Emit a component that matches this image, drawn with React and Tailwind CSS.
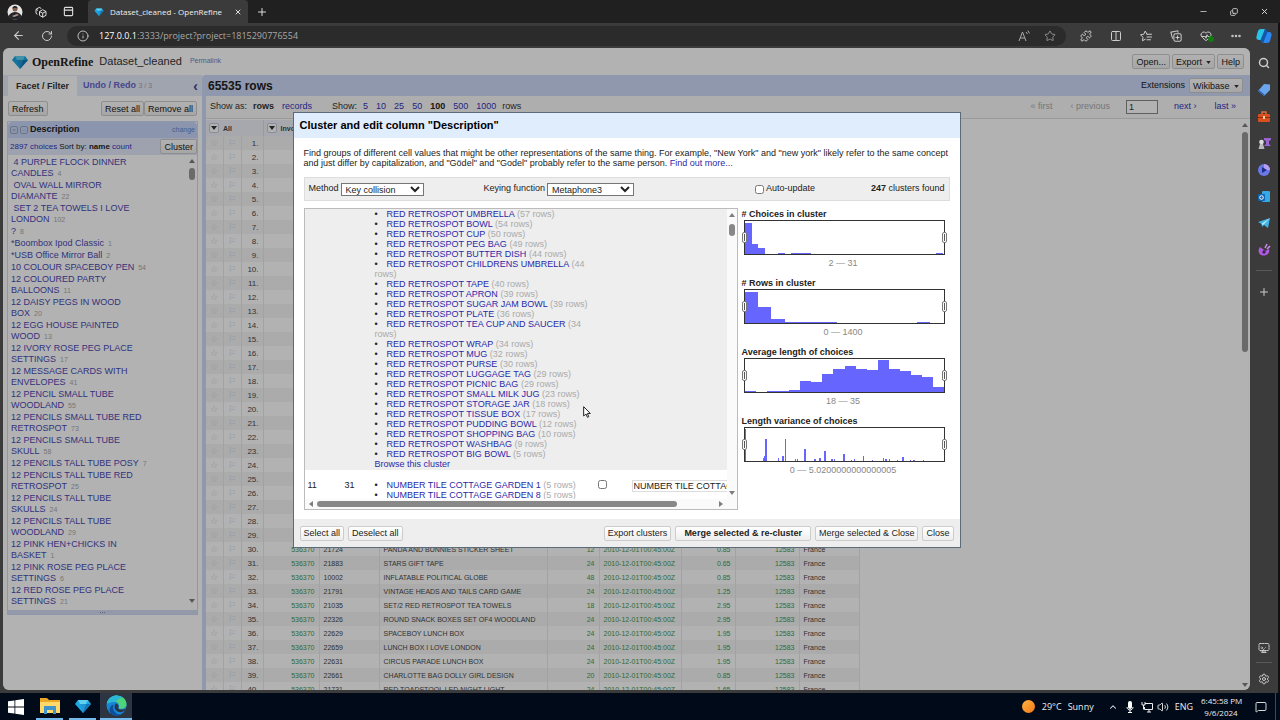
import {
    ArrowLeft, RotateCw, Info, Plus, X, Minus, Copy, Star, Puzzle, Columns2, HeartPulse,
    Ellipsis, Search, Settings, ChevronUp, Volume2, MessageSquare, PanelTop, Scissors, Monitor,
} from 'lucide-react';

const choices = [
    [['\u00a04 PURPLE FLOCK DINNER', 'CANDLES'], 4],
    [['\u00a0OVAL WALL MIRROR', 'DIAMANTE'], 22],
    [['\u00a0SET 2 TEA TOWELS I LOVE', 'LONDON'], 102],
    [['?'], 8],
    [['*Boombox Ipod Classic'], 1],
    [['*USB Office Mirror Ball'], 2],
    [['10 COLOUR SPACEBOY PEN'], 54],
    [['12 COLOURED PARTY', 'BALLOONS'], 11],
    [['12 DAISY PEGS IN WOOD', 'BOX'], 20],
    [['12 EGG HOUSE PAINTED', 'WOOD'], 13],
    [['12 IVORY ROSE PEG PLACE', 'SETTINGS'], 17],
    [['12 MESSAGE CARDS WITH', 'ENVELOPES'], 41],
    [['12 PENCIL SMALL TUBE', 'WOODLAND'], 55],
    [['12 PENCILS SMALL TUBE RED', 'RETROSPOT'], 73],
    [['12 PENCILS SMALL TUBE', 'SKULL'], 58],
    [['12 PENCILS TALL TUBE POSY'], 7],
    [['12 PENCILS TALL TUBE RED', 'RETROSPOT'], 25],
    [['12 PENCILS TALL TUBE', 'SKULLS'], 24],
    [['12 PENCILS TALL TUBE', 'WOODLAND'], 29],
    [['12 PINK HEN+CHICKS IN', 'BASKET'], 1],
    [['12 PINK ROSE PEG PLACE', 'SETTINGS'], 6],
    [['12 RED ROSE PEG PLACE', 'SETTINGS'], 21],
    [['15CM CHRISTMAS GLASS BALL'], 20],
];

const records = {
    30: ['21724', 'PANDA AND BUNNIES STICKER SHEET', 12, '0.85'],
    31: ['21883', 'STARS GIFT TAPE', 24, '0.65'],
    32: ['10002', 'INFLATABLE POLITICAL GLOBE', 48, '0.85'],
    33: ['21791', 'VINTAGE HEADS AND TAILS CARD GAME', 24, '1.25'],
    34: ['21035', 'SET/2 RED RETROSPOT TEA TOWELS', 18, '2.95'],
    35: ['22326', 'ROUND SNACK BOXES SET OF4 WOODLAND', 24, '2.95'],
    36: ['22629', 'SPACEBOY LUNCH BOX', 24, '1.95'],
    37: ['22659', 'LUNCH BOX I LOVE LONDON', 24, '1.95'],
    38: ['22631', 'CIRCUS PARADE LUNCH BOX', 24, '1.95'],
    39: ['22661', 'CHARLOTTE BAG DOLLY GIRL DESIGN', 20, '0.85'],
    40: ['21731', 'RED TOADSTOOL LED NIGHT LIGHT', 24, '1.65'],
};

const clusterRows = [
    ['UMBRELLA', 57], ['BOWL', 54], ['CUP', 50], ['PEG BAG', 49], ['BUTTER DISH', 44],
    ['CHILDRENS UMBRELLA', 44], ['TAPE', 40], ['APRON', 39], ['SUGAR JAM BOWL', 39], ['PLATE', 36],
    ['TEA CUP AND SAUCER', 34], ['WRAP', 34], ['MUG', 32], ['PURSE', 30], ['LUGGAGE TAG', 29],
    ['PICNIC BAG', 29], ['SMALL MILK JUG', 23], ['STORAGE JAR', 18], ['TISSUE BOX', 17],
    ['PUDDING BOWL', 12], ['SHOPPING BAG', 10], ['WASHBAG', 9], ['BIG BOWL', 5],
];

// bars are [x, width, height] on a 603 x 103 grid
const charts = [
    {
        title: '# Choices in cluster',
        range: '2 — 31',
        bars: [[0, 20, 98], [20, 20, 31], [40, 20, 20], [100, 20, 4], [140, 60, 3], [580, 20, 3]],
    },
    {
        title: '# Rows in cluster',
        range: '0 — 1400',
        bars: [[0, 40, 98], [40, 40, 50], [80, 40, 12], [120, 160, 3], [520, 42, 3]],
    },
    {
        title: 'Average length of choices',
        range: '18 — 35',
        bars: [4, 0, 4, 4, 7, 35, 32, 57, 72, 82, 72, 68, 100, 72, 66, 52, 47, 17].map((h, i) => [i * 33.5, 33.5, h]),
    },
    {
        title: 'Length variance of choices',
        range: '0 — 5.0200000000000005',
        bars: [
            [0, 100], [55, 8], [59, 17], [62, 68], [99, 10], [113, 15], [120, 68], [150, 6], [157, 6], [180, 38],
            [210, 5], [225, 10], [240, 32], [262, 5], [270, 6], [298, 22], [320, 4], [330, 6], [358, 16], [385, 4],
            [417, 10], [425, 5], [435, 5], [460, 4], [477, 14], [500, 4], [510, 4], [538, 4],
        ].map(([x, h]) => [x, 4, h]),
    },
];

const Gem = ({ className }) => (
    <svg viewBox="0 0 16 14" className={className}>
        <path d="M3 1h10l3 4-8 9-8-9z" fill="#1ba8e0" />
        <path d="M3 1h10l-2 4H5z" fill="#5fd0f2" />
        <path d="M5 5h6l-3 9z" fill="#2196d8" />
        <path d="M11 5h5l-8 9z" fill="#1577b8" />
    </svg>
);

const Caret = () => (
    <svg viewBox="0 0 6 4" className="ml-0.5 inline-block h-[3px] w-[5px]"><path d="M0 0h6L3 4z" fill="#333" /></svg>
);

const Btn = ({ children, className = 'px-[3px]' }) => (
    <button className={`h-[15px] shrink-0 whitespace-nowrap rounded-xs border border-[#ccc] bg-linear-to-b from-white to-[#eee] text-[9px] leading-3 text-[#222] ${className}`}>
        {children}
    </button>
);

const Arrow = ({ dir, className = '' }) => {
    const paths = { up: 'M0 5h6L3 1z', down: 'M0 1h6L3 5z', left: 'M5 0v6L1 3z', right: 'M1 0v6l4-3z' };
    return <svg viewBox="0 0 6 6" className={`size-1.5 shrink-0 ${className}`}><path d={paths[dir]} fill="#7d7d7d" /></svg>;
};

const TabBar = () => (
    <div className="flex h-[23px] shrink-0 items-center bg-[#202020] text-[#ddd]">
        <svg viewBox="0 0 16 16" className="ml-[7px] size-4">
            <circle cx="8" cy="8" r="7.5" fill="#e9e4e1" />
            <circle cx="8" cy="5" r="2.5" fill="#80604f" />
            <path d="M5.400 4.500a2.600 2.600 0 0 1 5.200 0l-2.600-.8z" fill="#222" />
            <path d="M1.500 12c2-3 4-4 6.500-4s5 1 6.500 4A7.500 7.500 0 0 1 8 15.500 7.500 7.500 0 0 1 1.500 12z" fill="#23252b" />
            <path d="M5 12l5-2 2 1-5 2z" fill="#b99a8a" />
        </svg>
        <svg viewBox="0 0 12 12" className="ml-3 size-3" fill="none" stroke="#ddd">
            <path d="M4.500 5.500l3.200-1.800L11 5.500v3.800l-3.300 1.900-3.200-1.900zM4.500 5.500l3.200 1.700L11 5.500M7.700 7.200v4M2.500 8.300L1 7.400V3.300L4.300 1.400l2 1.100M1 3.300l2 1.100" />
        </svg>
        <PanelTop size={11} strokeWidth={2.4} className="ml-4" />
        <div className="ml-3.5 flex h-full w-[160px] items-center rounded-t bg-[#3b3b3b] pl-1.5">
            <Gem className="h-2 w-2.5" />
            <span className="ml-1.5 whitespace-nowrap text-[8px] text-[#eee]">Dataset_cleaned - OpenRefine</span>
            <button aria-label="Close tab" className="ml-auto mr-1.5"><X size={8} strokeWidth={3} /></button>
        </div>
        <button aria-label="New tab" className="ml-2"><Plus size={12} strokeWidth={2} /></button>
        <div className="ml-auto mr-[11px] flex items-center gap-[22px]">
            <button aria-label="Minimize"><Minus size={9} /></button>
            <button aria-label="Restore"><Copy size={8} strokeWidth={2.5} className="-scale-x-100 rotate-180" /></button>
            <button aria-label="Close"><X size={9} strokeWidth={2.5} /></button>
        </div>
    </div>
);

const Toolbar = () => (
    <div className="flex h-[25px] shrink-0 items-center text-[#ccc]">
        <button aria-label="Back" className="ml-3"><ArrowLeft size={13} strokeWidth={2} /></button>
        <button aria-label="Reload" className="ml-4"><RotateCw size={12} strokeWidth={2} /></button>
        <div className="ml-3.5 flex h-5 flex-1 items-center rounded-full bg-[#2b2b2b] px-2.5">
            <Info size={12} strokeWidth={1.8} />
            <span className="ml-2.5 text-[9px] text-[#a8a8a8]"><span className="text-white">127.0.0.1</span>:3333/project?project=1815290776554</span>
            <svg viewBox="0 0 12 12" className="ml-auto size-3" fill="none" stroke="#aaa">
                <path d="M1 11l3.500-9L8 11M2.300 8h4.500M8 2l1.500 2M9.800.6l1.700 2.800" />
            </svg>
            <Star size={12} strokeWidth={1.8} className="ml-3.5 text-[#999]" />
        </div>
        <div className="ml-3.5 mr-2 flex items-center gap-[18px]">
            <Puzzle size={12} strokeWidth={2} />
            <Columns2 size={12} strokeWidth={2} />
            <svg viewBox="0 0 24 24" className="size-3" fill="none" stroke="#ccc" strokeWidth="2" strokeLinejoin="round" strokeLinecap="round">
                <path d="M14 8.500L10.500 2 7.500 8.500 1 9.500l5 5L5 21.500l5.500-3M14 8.500h9M14 14h9M14 19.500h7" />
            </svg>
            <svg viewBox="0 0 14 14" className="size-3" fill="none" stroke="#ccc" strokeWidth="1.200">
                <rect x="4.500" y="4.500" width="8.500" height="8.500" rx="1.500" />
                <path d="M8.800 6.500v4.500M6.500 8.800H11M3 10L1 2.500 9 1l.5 2" />
            </svg>
            <span className="relative"><HeartPulse size={12} strokeWidth={2} /><i className="absolute -right-0.5 bottom-0 size-1.5 rounded-full bg-[#107c10]" /></span>
            <Ellipsis size={12} strokeWidth={3} />
        </div>
    </div>
);

const EdgeSidebar = () => (
    <aside className="flex w-[30px] shrink-0 flex-col items-center border-r-2 border-[#111] bg-[#3b3b3b] pt-[5px]">
        <svg viewBox="0 0 16 16" className="size-4">
            <path d="M5 1h4L6 12H3C1 12 0 10.500.500 8.500L2 3c.5-1.300 1.500-2 3-2z" fill="#29c5e8" />
            <path d="M11 4h2c2 0 3 1.500 2.500 3.500L14 13c-.5 1.300-1.500 2-3 2H7z" fill="#2b86f0" />
            <path d="M9 1c2 0 2 1 2.500 3L7 15c-2 0-2-1-2.500-3z" fill="#1456a8" />
        </svg>
        <Search size={12} strokeWidth={3} className="mt-[13px] text-[#ccc]" />
        <svg viewBox="0 0 14 14" className="mt-[14px] size-3.5">
            <path d="M7 1l6 .5V7l-6 6-6-5z" fill="#6ba5ee" /><path d="M1 8l6 5 1-1-6-5z" fill="#2e62b8" />
        </svg>
        <svg viewBox="0 0 14 14" className="mt-[13px] size-3.5">
            <path d="M5 4V2h4v2" fill="none" stroke="#e46a33" strokeWidth="1.500" />
            <rect x="1" y="4" width="12" height="8" rx="1" fill="#d94f1d" /><path d="M1 7h12v1H1z" fill="#8c2a0c" /><path d="M6 6h2v3H6z" fill="#ffd0a0" />
        </svg>
        <svg viewBox="0 0 14 14" className="mt-[13px] size-3.5">
            <path d="M7 1h7v2l-2 1v3l2 2H7l2-2V4L7 3z" fill="#9a63d1" />
            <circle cx="4.500" cy="5" r="2.300" fill="#ddd" /><path d="M3 7h3l1.500 5h-6z" fill="#bbb" />
        </svg>
        <svg viewBox="0 0 14 14" className="mt-[12px] size-3.5">
            <circle cx="7" cy="7" r="6" fill="#6a78e8" /><path d="M7 1a6 6 0 0 1 6 6H7z" fill="#b59cf5" /><path d="M5 4l5 3-5 3z" fill="#1f2f86" />
        </svg>
        <svg viewBox="0 0 14 14" className="mt-[13px] size-3.5">
            <rect x="5" y="1" width="8" height="11" rx="1" fill="#35a8e8" /><rect x="1" y="4" width="7" height="7" rx="1" fill="#0f65b5" />
            <circle cx="4.500" cy="7.500" r="1.800" fill="none" stroke="#fff" />
        </svg>
        <svg viewBox="0 0 14 14" className="mt-[12px] size-3.5">
            <path d="M1 6l12-4-2 10-4-3-2 2-.5-3z" fill="#41b4e6" /><path d="M4.500 8L13 2 6 9z" fill="#c9eefc" />
        </svg>
        <svg viewBox="0 0 14 14" className="mt-[13px] size-3.5">
            <path d="M8 5l2-4M10 6l3-3" stroke="#d18cf5" strokeWidth="1.500" /><path d="M3 4c-3 4-1 8.500 3.500 8.500S13 9 12 6L8.500 8z" fill="#b05ae0" />
            <circle cx="7" cy="9" r="1.700" fill="#3b2450" />
        </svg>
        <span className="mt-[13px] h-px w-4 bg-[#5a5a5a]" />
        <button aria-label="Customize" className="mt-[15px]"><Plus size={12} strokeWidth={2} className="text-[#ccc]" /></button>
        <span className="relative mt-auto text-[#ccc]"><Monitor size={12} strokeDasharray="3 2" /><Scissors size={7} className="absolute top-1 left-0.5" /></span>
        <span className="mt-2 h-px w-4 bg-[#5a5a5a]" />
        <Settings size={12} className="mt-2.5 mb-2 text-[#ccc]" />
    </aside>
);

const FacetPanel = () => (
    <section className="flex w-[199px] shrink-0 flex-col">
        <div className="flex h-[21px] items-end bg-[#e6ebfa] pl-[5px] text-[9px]">
            <a href="#facets" className="h-[20px] bg-white px-2 leading-[20px] font-bold text-[#333]">Facet / Filter</a>
            <a href="#history" className="ml-1.5 leading-[20px] font-bold text-[#66c]">Undo / Redo <span className="text-[7px] font-normal text-[#aaa]">3 / 3</span></a>
            <button aria-label="Hide panel" className="mr-1 ml-auto text-[14px] leading-[20px] font-bold text-[#449]">‹</button>
        </div>
        <div className="flex px-[5px] py-[5px]">
            <Btn>Refresh</Btn>
            <Btn className="ml-auto px-[3px]">Reset all</Btn>
            <Btn>Remove all</Btn>
        </div>
        <div className="mx-1 border border-[#ccd8f6]">
            <div className="flex h-4 items-center rounded-t bg-[#c8d6f8] px-0.5">
                <span className="size-2 rounded-xs border border-[#9ab] text-center text-[6px] leading-1.5 text-[#99b]">×</span>
                <span className="ml-0.5 size-2 rounded-xs border border-[#9ab] text-center text-[6px] leading-1.5 text-[#99b]">–</span>
                <b className="ml-0.5 text-[9px] text-[#222]">Description</b>
                <a href="#change" className="ml-auto text-[7px] text-[#68c]">change</a>
            </div>
            <div className="flex h-[17px] items-center bg-[#e2e9fb] pl-0.5 text-[8px] whitespace-nowrap text-[#222]">
                <a href="#choices" className="text-[#33b]">2897 choices</a>
                <span className="ml-0.5">Sort by: <b>name</b> <a href="#count" className="text-[#33b]">count</a></span>
                <Btn className="ml-auto px-[3px]">Cluster</Btn>
            </div>
            <div className="flex h-[455px] overflow-hidden pt-px">
                <ul className="flex-1 pl-[3px] text-[9px] leading-[11px] text-[#4a4ab4]">
                    {choices.map(([lines, count]) => (
                        <li key={lines.join()} className="pt-px whitespace-nowrap">
                            {lines.map((line, i) => (
                                <div key={line}>{line}{i === lines.length - 1 && <span className="ml-1 text-[7px] text-[#aaa]">{count}</span>}</div>
                            ))}
                        </li>
                    ))}
                </ul>
                <div className="flex w-2.5 flex-col items-center pt-0.5 pb-1.5">
                    <Arrow dir="up" />
                    <span className="mt-1 h-3 w-1.5 rounded-full bg-[#999]" />
                    <Arrow dir="down" className="mt-auto" />
                </div>
            </div>
            <div className="flex h-1 items-center justify-center gap-px bg-[#d3dcf2]">
                <i className="size-px bg-[#88a]" /><i className="size-px bg-[#88a]" /><i className="size-px bg-[#88a]" />
            </div>
        </div>
    </section>
);

const MenuButton = () => (
    <button aria-label="Column menu" className="flex size-2.5 shrink-0 items-center justify-center rounded-xs border border-[#c4cbe0] bg-white">
        <svg viewBox="0 0 6 4" className="h-1 w-1.5"><path d="M0 0h6L3 4z" fill="#333" /></svg>
    </button>
);

const DataGrid = () => (
    <table className="w-[653px] table-fixed border-collapse text-[7px] leading-[13px] text-[#484848] [&_td]:overflow-hidden [&_td]:border-r [&_td]:border-[#e8e8e8] [&_td]:px-1 [&_td]:py-0 [&_td]:whitespace-nowrap">
        <colgroup>
            <col className="w-[17px]" /><col className="w-[18px]" /><col className="w-[22px]" /><col className="w-[56px]" />
            <col className="w-[60px]" /><col className="w-[168px]" /><col className="w-[52px]" /><col className="w-[82px]" />
            <col className="w-[54px]" /><col className="w-[64px]" /><col className="w-[60px]" />
        </colgroup>
        <thead>
            <tr className="h-4 bg-[#eef1fa]">
                <th colSpan={3} className="border-r border-[#ddd] pl-[3px]"><span className="flex items-center gap-1"><MenuButton />All</span></th>
                <th className="border-r border-[#ddd] pl-[3px]"><span className="flex items-center gap-1"><MenuButton />InvoiceNo</span></th>
                <th colSpan={7} />
            </tr>
        </thead>
        <tbody>
            {Array.from({ length: 40 }, (_, i) => {
                const n = i + 1;
                const rec = records[n];
                return (
                    <tr key={n} className={n % 2 ? 'h-[14px] bg-[#f5f5f5]' : 'h-[14px] bg-white'}>
                        <td className="text-[9px] text-[#cdd6e4]">☆</td>
                        <td className="text-[9px] text-[#cdd6e4]">⚐</td>
                        <td className="text-right text-[8px]">{n}.</td>
                        <td className="text-right text-[#4a9a4a]">{rec && '536370'}</td>
                        <td>{rec && rec[0]}</td>
                        <td>{rec && rec[1]}</td>
                        <td className="text-right text-[#4a9a4a]">{rec && rec[2]}</td>
                        <td className="text-[#4a9a4a]">{rec && '2010-12-01T00:45:00Z'}</td>
                        <td className="text-right text-[#4a9a4a]">{rec && rec[3]}</td>
                        <td className="text-right text-[#4a9a4a]">{rec && '12583'}</td>
                        <td>{rec && 'France'}</td>
                    </tr>
                );
            })}
        </tbody>
    </table>
);

const ViewPanel = () => (
    <section className="flex min-w-0 flex-1 flex-col rounded-tl border-l-4 border-[#cddaf8]">
        <div className="flex h-[21px] shrink-0 items-center bg-[#cddaf8] pr-[7px] pl-0.5">
            <b className="text-[12px] text-[#222]">65535 rows</b>
            <span className="mr-1 ml-auto text-[9px] text-[#222]">Extensions</span>
            <Btn>Wikibase <Caret /></Btn>
        </div>
        <div className="flex h-[23px] shrink-0 items-center border-b border-[#ddd] bg-[#fafafa] pl-1 text-[9px] text-[#333]">
            <span>Show as:</span><b className="ml-1.5">rows</b><a href="#records" className="ml-2 text-[#33b]">records</a>
            <span className="ml-5">Show:</span>
            <div className="ml-1.5 flex gap-2 text-[#33b]">
                <a href="#5">5</a><a href="#10">10</a><a href="#25">25</a><a href="#50">50</a>
                <b className="text-[#222]">100</b><a href="#500">500</a><a href="#1000">1000</a>
            </div>
            <span className="ml-1.5">rows</span>
            <span className="ml-auto text-[#aaa]">« first</span>
            <span className="ml-[18px] text-[#aaa]">‹ previous</span>
            <input aria-label="Page" defaultValue="1" className="ml-4 h-[14px] w-8 border border-[#888] bg-white px-0.5" />
            <a href="#next" className="ml-4 text-[#33b]">next ›</a>
            <a href="#last" className="mr-3.5 ml-[18px] text-[#33b]">last »</a>
        </div>
        <div className="flex min-h-0 flex-1 overflow-hidden">
            <div className="flex-1"><div className="h-px" /><DataGrid /></div>
            <div className="flex w-2.5 flex-col items-center pt-[3px] pb-0.5">
                <Arrow dir="up" />
                <span className="mt-1 h-[220px] w-1.5 rounded-full bg-[#999]" />
                <Arrow dir="down" className="mt-auto" />
            </div>
        </div>
    </section>
);

const Handle = () => (
    <span className="z-10 flex h-[11px] w-[5px] items-center justify-center rounded-xs border border-[#777] bg-white">
        <i className="h-[7px] w-px bg-[#555]" />
    </span>
);

const Histogram = ({ title, range, bars }) => (
    <div className="h-[69px] pr-[5px]">
        <h3 className="text-[9px] leading-[12px] font-bold text-[#222]">{title}</h3>
        <div className="relative ml-0.5 h-[35px] border border-[#333] bg-white">
            <svg viewBox="0 0 603 103" preserveAspectRatio="none" shapeRendering="crispEdges" className="h-full w-full">
                {bars.map(([x, w, h]) => <rect key={x} x={x} y={103 - h} width={w} height={h} fill="#6666ff" />)}
            </svg>
            <div className="absolute inset-y-0 -right-[3px] -left-[3px] flex items-center justify-between"><Handle /><Handle /></div>
        </div>
        <p className="mt-0.5 text-center text-[9px] leading-[12px] text-[#888]">{range}</p>
    </div>
);

const Choice = ({ name, rows }) => (
    <li className="w-[216px]">
        <span className="inline-block w-3">•</span>
        <a href="#choice" className="text-[#2a2aa8]">{name}</a>{' '}
        <span className="text-[#aaa]">({rows} rows)</span>
    </li>
);

const ClusterDialog = () => (
    <div role="dialog" aria-label="Cluster and edit column" className="w-[668px] border border-[#5c6b78] bg-white text-[9px] text-[#222]">
        <h2 className="h-[25px] bg-[#e0edfc] px-1.5 text-[11px] leading-[25px] font-bold text-black">Cluster and edit column "Description"</h2>
        <div className="px-2.5 pt-2.5 pb-[9px]">
            <p className="leading-[10px]">
                Find groups of different cell values that might be other representations of the same thing. For example, "New York" and "new york" likely refer to the same concept and
                just differ by capitalization, and "Gödel" and "Godel" probably refer to the same person. <a href="#more" className="text-[#2a2aa8]">Find out more...</a>
            </p>
            <div className="mt-[9px] flex h-6 items-center border border-[#ddd] bg-[#eee] px-1">
                <label htmlFor="method">Method</label>
                <select id="method" className="ml-0.5 h-[13px] w-[83px] border border-[#767676] bg-white">
                    <option>Key collision</option>
                </select>
                <label htmlFor="keying" className="ml-[60px]">Keying function</label>
                <select id="keying" className="ml-0.5 h-[13px] w-[87px] border border-[#767676] bg-white">
                    <option>Metaphone3</option>
                </select>
                <label className="ml-auto flex items-center gap-0.5"><input type="checkbox" className="size-[9px]" />Auto-update</label>
                <span className="ml-[56px]"><b>247</b> clusters found</span>
            </div>
            <div className="mt-[7px] flex gap-1">
                <div className="flex h-[302px] w-[434px] flex-col border border-[#bbb]">
                    <div className="flex min-h-0 flex-1">
                        <div className="min-w-0 flex-1 overflow-hidden leading-[10px]">
                            <div className="bg-[#eee] pb-px pl-[70px]">
                                <ul>{clusterRows.map(([name, rows]) => <Choice key={name} name={`RED RETROSPOT ${name}`} rows={rows} />)}</ul>
                                <a href="#browse" className="text-[#2a2aa8]">Browse this cluster</a>
                            </div>
                            <div className="flex pt-2.5 whitespace-nowrap">
                                <span className="w-[37px] shrink-0 pl-[3px]">11</span>
                                <span className="w-[33px] shrink-0 pl-[3px]">31</span>
                                <ul className="w-[223px] shrink-0">
                                    <Choice name="NUMBER TILE COTTAGE GARDEN 1" rows={5} />
                                    <Choice name="NUMBER TILE COTTAGE GARDEN 8" rows={5} />
                                </ul>
                                <input type="checkbox" aria-label="Merge cluster 11" className="size-[9px] shrink-0" />
                                <input aria-label="New cell value" defaultValue="NUMBER TILE COTTAGE GARDEN 1" className="ml-[25px] h-3 w-[180px] shrink-0 border border-[#ddd] bg-white px-px" />
                            </div>
                        </div>
                        <div className="flex w-2.5 flex-col items-center bg-[#fafafa] py-[3px]">
                            <Arrow dir="up" />
                            <span className="mt-1.5 h-3 w-1.5 rounded-full bg-[#888]" />
                            <Arrow dir="down" className="mt-auto" />
                        </div>
                    </div>
                    <div className="flex h-2.5 shrink-0 items-center bg-[#fafafa] pr-[13px] pl-[3px]">
                        <Arrow dir="left" />
                        <span className="mr-auto ml-[3px] h-1.5 w-[360px] rounded-full bg-[#888]" />
                        <Arrow dir="right" />
                    </div>
                </div>
                <div className="flex-1">{charts.map((chart) => <Histogram key={chart.title} {...chart} />)}</div>
            </div>
        </div>
        <div className="flex h-7 items-center gap-1 bg-[#eee] px-1.5">
            <Btn>Select all</Btn>
            <Btn>Deselect all</Btn>
            <Btn className="ml-auto px-[3px]">Export clusters</Btn>
            <Btn className="px-2 font-bold">Merge selected &amp; re-cluster</Btn>
            <Btn>Merge selected &amp; Close</Btn>
            <Btn>Close</Btn>
        </div>
    </div>
);

const Page = () => (
    <main className="relative ml-[3px] flex min-h-0 flex-1 flex-col overflow-hidden rounded-md bg-white font-['Liberation_Sans',Arial,sans-serif]">
        <header className="flex h-[27px] shrink-0 items-center pr-1.5 pl-[9px]">
            <Gem className="h-3.5 w-4" />
            <b className="ml-1 font-['Liberation_Serif',serif] text-[12px] text-[#222]">OpenRefine</b>
            <span className="ml-1.5 text-[11px] text-[#333]">Dataset_cleaned</span>
            <a href="#permalink" className="ml-2 text-[7px] text-[#68c]">Permalink</a>
            <div className="ml-auto flex gap-0.5"><Btn>Open...</Btn><Btn>Export <Caret /></Btn><Btn>Help</Btn></div>
        </header>
        <div className="flex min-h-0 flex-1">
            <FacetPanel />
            <ViewPanel />
        </div>
        <div className="absolute inset-0 flex items-start justify-center bg-black/30 pt-16">
            <ClusterDialog />
        </div>
        <svg viewBox="0 0 12 18" className="absolute top-[358px] left-[580px] h-3 w-2">
            <path d="M1 1v14l3.500-3 2.200 5 2-1-2.200-4.800H11z" fill="#fff" stroke="#222" strokeWidth="1.500" />
        </svg>
    </main>
);

const Taskbar = () => (
    <footer className="flex h-[27px] shrink-0 items-center bg-[#000a18] text-[9px] text-[#eee]">
        <svg viewBox="0 0 16 16" className="ml-2 size-4" fill="#fff">
            <path d="M0 2.300L6.500 1.400V7.600H0zM7.300 1.300L16 0v7.600H7.300zM0 8.400h6.500v6.200L0 13.700zM7.300 8.400H16V16l-8.700-1.300z" />
        </svg>
        <span className="ml-3 flex h-full w-[27px] flex-col items-center justify-between border-b-2 border-[#76b9ed] pt-1">
            <svg viewBox="0 0 20 17" className="h-[17px] w-5">
                <path d="M0 1h7l2 2h11v13H0z" fill="#e9a927" /><path d="M0 5h20v11H0z" fill="#ffd869" />
                <path d="M4 9h12v8h-3v-4H7v4H4z" fill="#3f94c9" />
            </svg>
        </span>
        <span className="ml-1.5 flex h-full w-[27px] flex-col items-center border-b-2 border-[#76b9ed] pt-1.5"><Gem className="h-3.5 w-4" /></span>
        <span className="ml-1 flex h-full w-8 flex-col items-center border-b-2 border-[#76b9ed] bg-[#2c3541] pt-0.5">
            <svg viewBox="0 0 22 22" className="size-[21px]">
                <circle cx="11" cy="11" r="10.500" fill="#1686d9" />
                <path d="M1 9C2 3 7 .5 11 .5c6 0 10.500 4 10.500 9 0 3.500-3 5-5.500 5-2 0-3-.8-2.500-1.500C14.500 11 13 7 9 7 5 7 1.500 9 1 9z" fill="#4fd27c" />
                <path d="M1 9C2 3 7 .5 11 .5c3 0 5 1 6.500 2.300C12 3 12 7 9 7 5 7 1.500 9 1 9z" fill="#2bb8d8" />
                <path d="M8 10c-2 5 1 10 7 10.500-3 1.500-7 1-9.500-.6C2 16 4 11 8 10z" fill="#0d4f9c" />
                <path d="M10 9c2 0 3.500 2 3 3.500-1 1.500 1 3 4 2.800 2 0 3-.6 4-1.300-1 2.500-3 4-5 4-5 .5-9-4-6-9z" fill="#2c3541" />
            </svg>
        </span>
        <span className="ml-auto size-[13px] rounded-full bg-linear-to-br from-[#ffb340] to-[#f07818]" />
        <span className="ml-[7px]">29°C</span><span className="ml-1.5">Sunny</span>
        <ChevronUp size={10} strokeWidth={2.5} className="ml-3.5" />
        <svg viewBox="0 0 8 12" className="ml-2 h-3 w-2"><rect x="2" y="0" width="4" height="8" rx="2" fill="#fff" /><path d="M1 6c0 4 6 4 6 0M4 9v2M2 11.500h4" stroke="#fff" fill="none" /></svg>
        <svg viewBox="0 0 12 12" className="ml-[7px] size-3" fill="none" stroke="#eee"><path d="M4 2.500h7.500v6H3.500V6M1 1v3h3V1M2.500 4v4.500M6 11h4M8 8.500V11" /></svg>
        <Volume2 size={12} strokeWidth={1.8} className="ml-1" />
        <span className="ml-1.5">ENG</span>
        <span className="ml-2 w-[40px] text-center text-[8px] leading-[12px] whitespace-nowrap">6:45:58 PM<br />9/6/2024</span>
        <MessageSquare size={12} strokeWidth={1.8} className="mr-2 ml-3.5" />
        <span className="mr-1 h-full w-px bg-[#445]" />
    </footer>
);

const App = () => (
    <div className="flex h-screen flex-col overflow-hidden bg-[#3b3b3b] font-['Open_Sans','Noto_Sans',sans-serif]">
        <TabBar />
        <div className="flex min-h-0 flex-1">
            <div className="flex min-w-0 flex-1 flex-col pb-[3px]">
                <Toolbar />
                <Page />
            </div>
            <EdgeSidebar />
        </div>
        <Taskbar />
    </div>
);

export default App;
